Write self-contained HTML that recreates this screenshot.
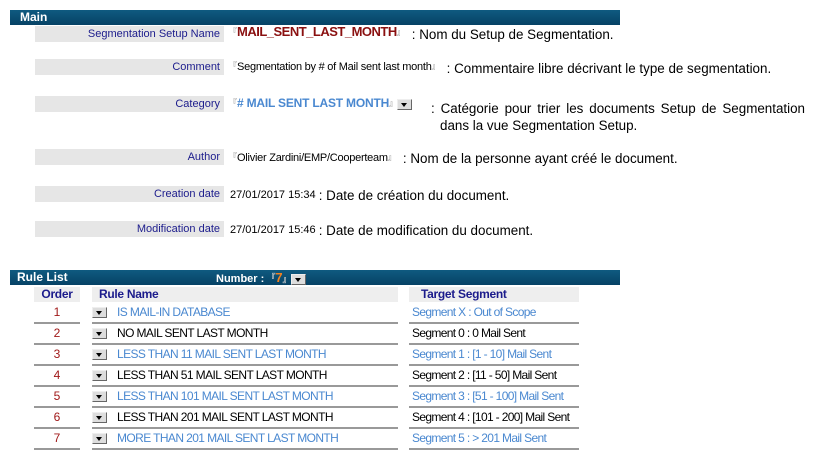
<!DOCTYPE html>
<html><head><style>
body{margin:0;width:813px;height:467px;background:#fff;position:relative;font-family:"Liberation Sans",Arial,sans-serif;overflow:hidden}
.bar{position:absolute;left:10px;width:610px;height:15px;background:linear-gradient(#0f5a80,#064265);color:#fff;font-weight:bold;font-size:12px;line-height:15px}
.lab{position:absolute;left:35px;width:185px;padding-right:4px;height:16px;background:#e6e6e6;color:#1c1c8c;font-size:11px;text-align:right;line-height:17px}
.v{position:absolute;font-size:11px;line-height:16px;white-space:nowrap;color:#000}
.d{font-size:13.4px;position:relative;top:3px;margin-left:4px}
.br{font-size:8px;color:#777;vertical-align:top}
.bb{font-size:8px;color:#777;vertical-align:bottom}
.dd{display:inline-block;width:13px;height:9px;background:#ddd;border:1px solid #888;border-color:#eee #666 #666 #eee;position:relative;vertical-align:middle}
.dd:after{content:"";position:absolute;left:3px;top:3px;border-left:3.5px solid transparent;border-right:3.5px solid transparent;border-top:4px solid #000}
.ch{position:absolute;top:287px;height:15px;background:#eee;color:#1c1c8c;font-weight:bold;font-size:12px;line-height:15px;letter-spacing:-0.3px}
.ln{position:absolute;height:2px;background:#999}
.o{position:absolute;left:34px;width:46px;text-align:center;color:#a01818;font-size:12px}
.r{position:absolute;left:92px;font-size:12px;white-space:nowrap;letter-spacing:-0.6px}
.r .dd{margin-right:10px}
.t{position:absolute;left:412px;font-size:12px;white-space:nowrap;letter-spacing:-0.65px}
.bl{color:#4a88d0}
.cd{position:absolute;font-size:13.4px;line-height:17px;white-space:nowrap}
</style></head><body>
<div class="bar" style="top:10px"><span style="padding-left:10px">Main</span></div>

<div class="lab" style="top:26px">Segmentation Setup Name</div>
<div class="v" style="left:229px;top:24px"><span class="br">『</span><b style="color:#8a1010;font-size:13px;letter-spacing:-0.5px">MAIL_SENT_LAST_MONTH</b><span class="bb">』</span> <span class="d">: Nom du Setup de Segmentation.</span></div>

<div class="lab" style="top:59px">Comment</div>
<div class="v" style="left:229px;top:58px"><span class="br">『</span><span style="letter-spacing:-0.25px">Segmentation by # of Mail sent last month</span><span class="bb">』</span> <span class="d">: Commentaire libre décrivant le type de segmentation.</span></div>

<div class="lab" style="top:96px">Category</div>
<div class="v" style="left:229px;top:95px"><span class="br">『</span><b style="color:#4a88d0;font-size:12px;letter-spacing:-0.2px"># MAIL SENT LAST MONTH</b><span class="bb">』</span><span class="dd"></span></div>
<div class="cd" style="left:431px;top:100px;width:374px;text-align:justify;text-align-last:justify">: Catégorie pour trier les documents Setup de Segmentation</div>
<div class="cd" style="left:440px;top:117px">dans la vue Segmentation Setup.</div>

<div class="lab" style="top:149px">Author</div>
<div class="v" style="left:229px;top:149px"><span class="br">『</span><span style="letter-spacing:-0.25px">Olivier Zardini/EMP/Cooperteam</span><span class="bb">』</span> <span class="d" style="top:2px">: Nom de la personne ayant créé le document.</span></div>

<div class="lab" style="top:186px">Creation date</div>
<div class="v" style="left:230px;top:186px"><span>27/01/2017 15:34</span> <span class="d" style="top:2px;margin-left:0">: Date de création du document.</span></div>

<div class="lab" style="top:221px">Modification date</div>
<div class="v" style="left:230px;top:221px"><span>27/01/2017 15:46</span> <span class="d" style="top:2px;margin-left:0">: Date de modification du document.</span></div>

<div class="bar" style="top:270px"><span style="padding-left:7px">Rule List</span><span style="position:absolute;left:206px;font-size:11px">Number : <span style="font-size:8px;color:#ccc;vertical-align:top">『</span><span style="color:#f08020;font-size:13px">7</span><span style="font-size:8px;color:#ccc">』</span><span class="dd"></span></span></div>

<div class="ch" style="left:34px;width:46px;text-align:center">Order</div>
<div class="ch" style="left:92px;width:299px;padding-left:7px">Rule Name</div>
<div class="ch" style="left:409px;width:158px;padding-left:12px">Target Segment</div>

<div class="o" style="top:305px">1</div><div class="r bl" style="top:305px"><span class="dd"></span>IS MAIL-IN DATABASE</div><div class="t bl" style="top:305px">Segment X : Out of Scope</div>
<div class="o" style="top:326px">2</div><div class="r" style="top:326px"><span class="dd"></span>NO MAIL SENT LAST MONTH</div><div class="t" style="top:326px">Segment 0 : 0 Mail Sent</div>
<div class="o" style="top:347px">3</div><div class="r bl" style="top:347px"><span class="dd"></span>LESS THAN 11 MAIL SENT LAST MONTH</div><div class="t bl" style="top:347px">Segment 1 : [1 - 10] Mail Sent</div>
<div class="o" style="top:368px">4</div><div class="r" style="top:368px"><span class="dd"></span>LESS THAN 51 MAIL SENT LAST MONTH</div><div class="t" style="top:368px">Segment 2 : [11 - 50] Mail Sent</div>
<div class="o" style="top:389px">5</div><div class="r bl" style="top:389px"><span class="dd"></span>LESS THAN 101 MAIL SENT LAST MONTH</div><div class="t bl" style="top:389px">Segment 3 : [51 - 100] Mail Sent</div>
<div class="o" style="top:410px">6</div><div class="r" style="top:410px"><span class="dd"></span>LESS THAN 201 MAIL SENT LAST MONTH</div><div class="t" style="top:410px">Segment 4 : [101 - 200] Mail Sent</div>
<div class="o" style="top:431px">7</div><div class="r bl" style="top:431px"><span class="dd"></span>MORE THAN 201 MAIL SENT LAST MONTH</div><div class="t bl" style="top:431px">Segment 5 : &gt; 201 Mail Sent</div>

<div id="lines"></div>
<script>
var h='';[322,343,364,385,406,427,448].forEach(function(y){
h+='<div class="ln" style="top:'+y+'px;left:34px;width:46px"></div>';
h+='<div class="ln" style="top:'+y+'px;left:92px;width:306px"></div>';
h+='<div class="ln" style="top:'+y+'px;left:409px;width:170px"></div>';});
document.getElementById('lines').innerHTML=h;
</script>
</body></html>
